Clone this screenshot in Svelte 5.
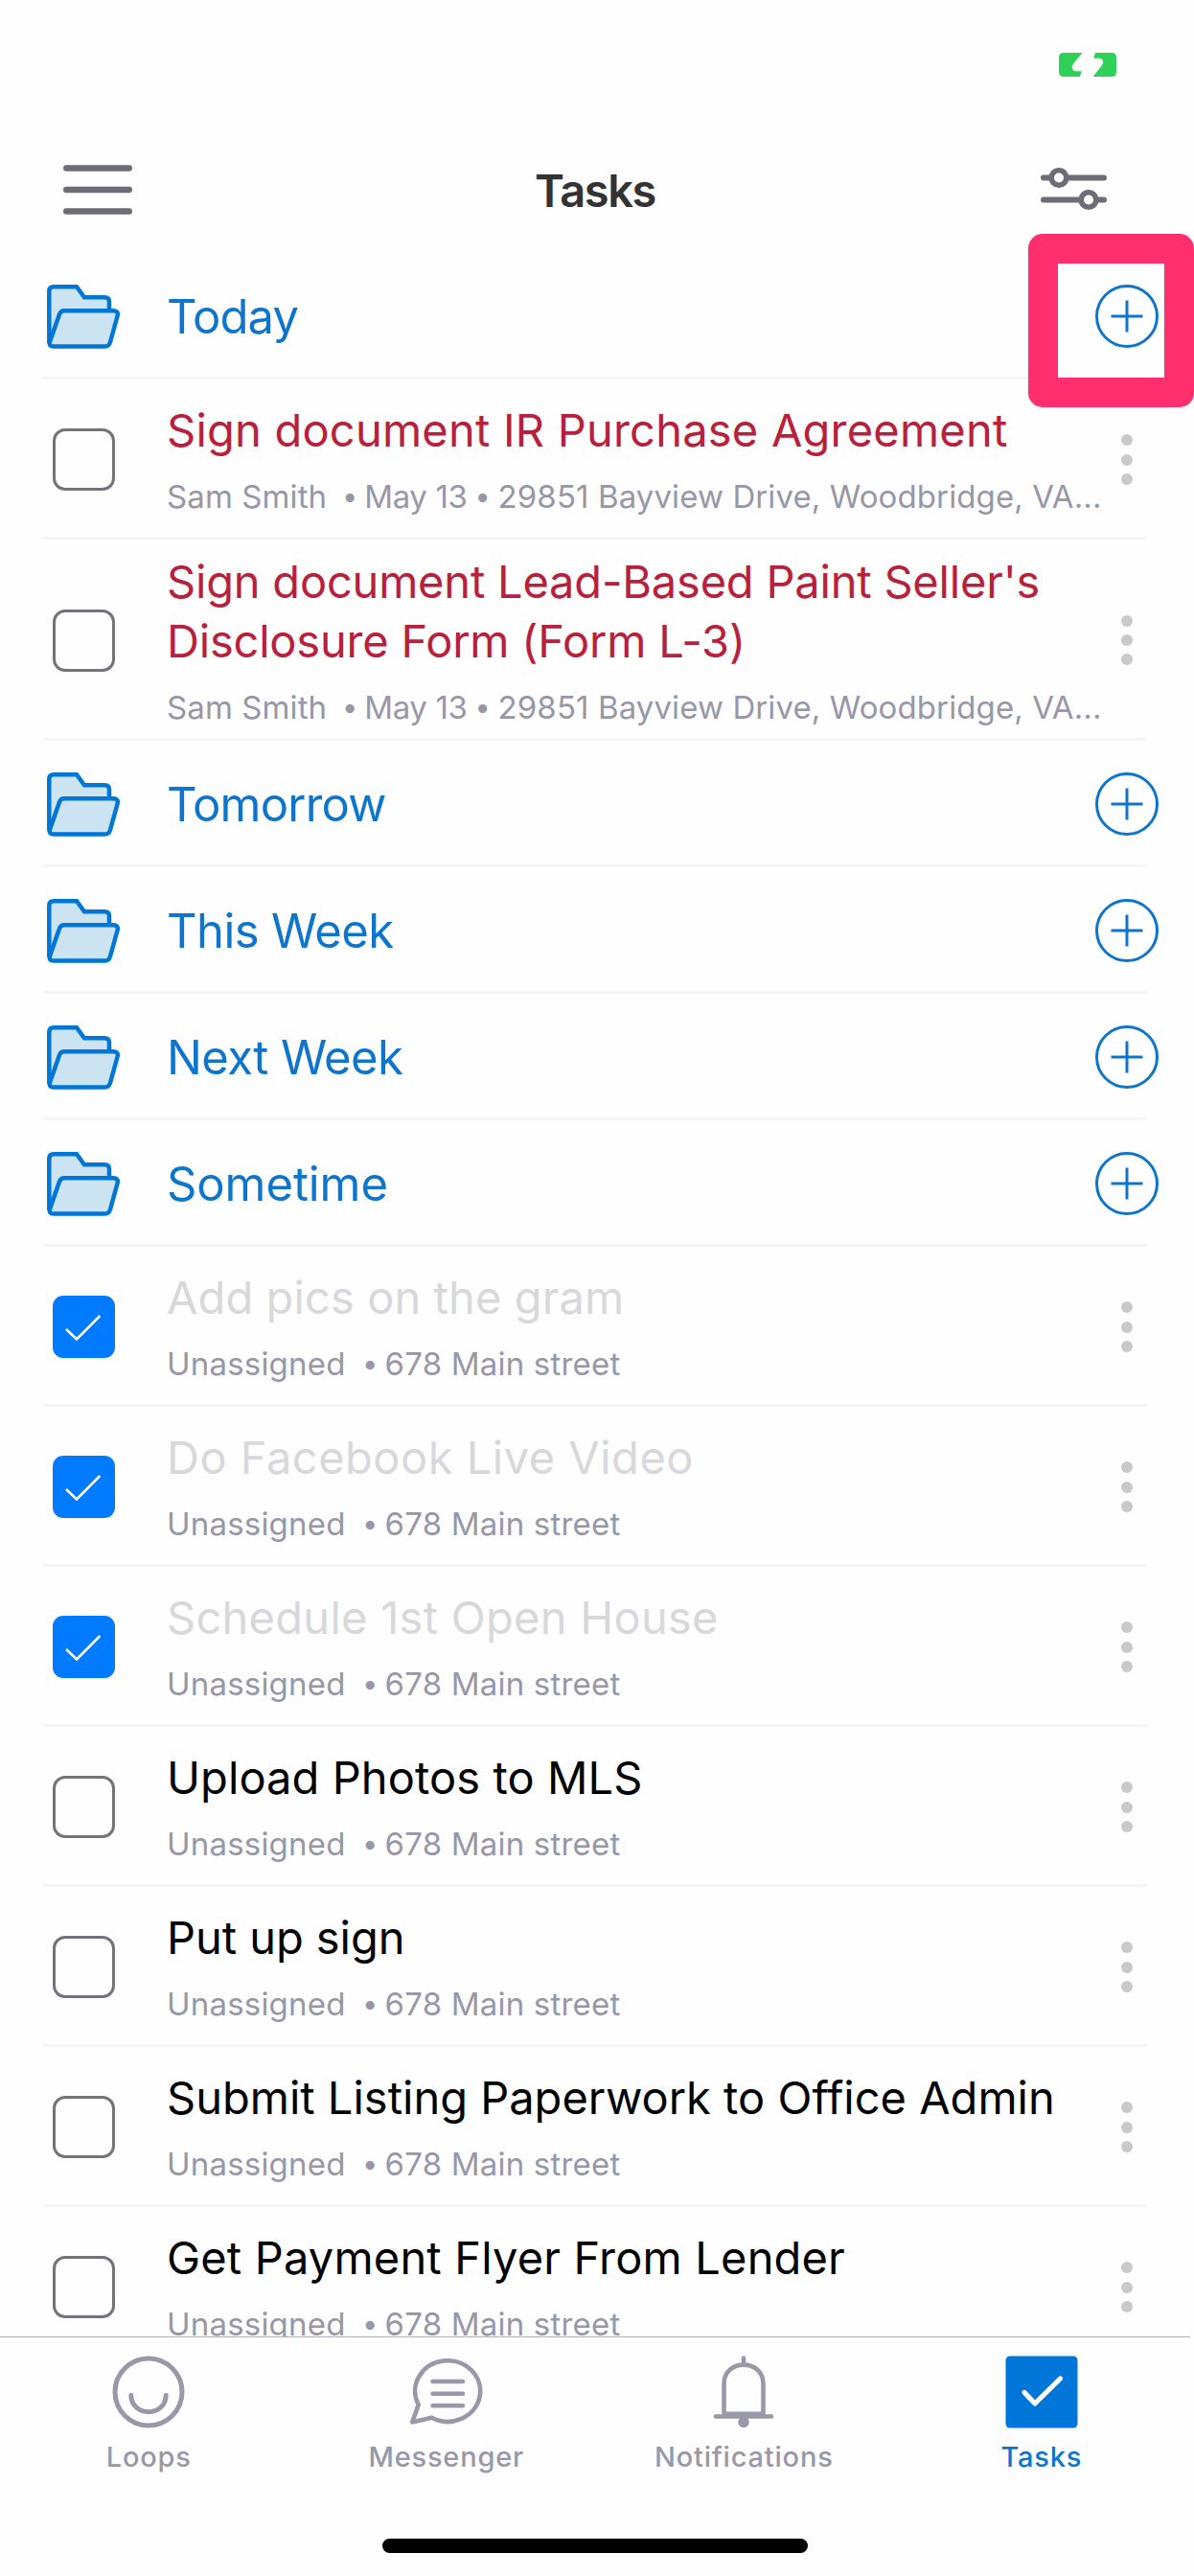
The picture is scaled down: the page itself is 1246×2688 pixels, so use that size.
<script>
  const address = '29851 Bayview Drive, Woodbridge, VA...';
  const signer = ['Sam Smith', 'May 13', address];
  const listing = ['Unassigned', '678 Main street'];

  // `tracking` is the title's letter spacing in pixels
  const rows = [
    { kind: 'folder', title: 'Today', highlighted: true, tracking: -0.9 },
    { kind: 'task', title: 'Sign document IR Purchase Agreement', overdue: true, meta: signer, tracking: 0.22 },
    { kind: 'task', title: "Sign document Lead-Based Paint Seller's Disclosure Form (Form L-3)", overdue: true, tall: true, meta: signer, tracking: -0.2 },
    { kind: 'folder', title: 'Tomorrow', tracking: -0.8 },
    { kind: 'folder', title: 'This Week', tracking: -0.6 },
    { kind: 'folder', title: 'Next Week', tracking: -0.6 },
    { kind: 'folder', title: 'Sometime', tracking: -0.1 },
    { kind: 'task', title: 'Add pics on the gram', done: true, meta: listing, tracking: 0.1 },
    { kind: 'task', title: 'Do Facebook Live Video', done: true, meta: listing, tracking: 0.5 },
    { kind: 'task', title: 'Schedule 1st Open House', done: true, meta: listing, tracking: 0.27 },
    { kind: 'task', title: 'Upload Photos to MLS', meta: listing, tracking: 0.08 },
    { kind: 'task', title: 'Put up sign', meta: listing, tracking: -0.05 },
    { kind: 'task', title: 'Submit Listing Paperwork to Office Admin', meta: listing, tracking: 0 },
    { kind: 'task', title: 'Get Payment Flyer From Lender', meta: listing, tracking: 0.18 }
  ];
  const tabs = ['Loops', 'Messenger', 'Notifications', 'Tasks'];
</script>

<div class="screen">
  <div class="status">
    <svg width="60" height="25" viewBox="0 0 60 25" aria-hidden="true">
      <path fill="#30d158" d="M5 0H24.5L15.3 11.2C12 15 14.500 19.300 18 19.300H23.700L22 25H5Q0 25 0 20V5Q0 0 5 0Z" />
      <path fill="#30d158" d="M38 0H55Q60 0 60 5V20Q60 25 55 25H35.500L44.500 13.800C48 9.500 45.500 5.800 42 5.800H36.300Z" />
    </svg>
  </div>

  <header>
    <svg width="72" height="54" viewBox="0 0 72 54" fill="none" stroke="#6d6c77" stroke-width="6.300" stroke-linecap="round">
      <path d="M3.200 4.500H68.800M3.200 27H68.800M3.200 49.500H68.800" />
    </svg>
    <h1>Tasks</h1>
    <svg class="filter" width="70" height="46" viewBox="0 0 70 46" fill="none" stroke="#6d6c77" stroke-width="6" stroke-linecap="round">
      <path d="M3 11.500H66M3 34.500H66" />
      <circle cx="19" cy="11.500" r="7.800" fill="#fff" stroke-width="5.600" />
      <circle cx="50" cy="34.500" r="7.800" fill="#fff" stroke-width="5.600" />
    </svg>
  </header>

  <main>
    {#each rows as row}
      <section class="row {row.kind}" class:tall={row.tall}>
        {#if row.kind === 'folder'}
          <div class="lead">
            <svg width="76" height="67" viewBox="0 0 76 67" fill="#cce3f2" stroke="#0076d6" stroke-width="4.500" stroke-linejoin="round">
              <path d="M2.300 60V7Q2.300 2.300 7 2.300H31L39 13.300H60Q65 13.300 65 18V28L30 50Z" stroke="none" />
              <path d="M2.300 61V7Q2.300 2.300 7 2.300H31L39 13.300H60Q65 13.300 65 18V27" fill="none" stroke-linejoin="miter" />
              <path d="M18 27.300H69Q75 27.300 73.500 33L66 60Q64.700 64.600 60.500 64.600H7Q1.500 64.600 3.200 59L13 31Q14.500 27.300 18 27.300Z" />
            </svg>
          </div>
          <h2 style:letter-spacing="{row.tracking}px">{row.title}</h2>
          <button class="add" aria-label="Add task" class:highlighted={row.highlighted}>
            <svg width="66" height="66" viewBox="0 0 66 66" fill="none" stroke="#0e75cd" stroke-width="3">
              <circle cx="33" cy="33" r="31.500" />
              <path d="M16.500 33H49.500M33 16.500V49.500" />
            </svg>
          </button>
        {:else}
          <div class="lead">
            <div class="box" class:checked={row.done}>
              {#if row.done}
                <svg width="65" height="65" viewBox="0 0 65 65" fill="none" stroke="#fff" stroke-width="2.600">
                  <path d="M14 35L25 45.500L49.300 21" />
                </svg>
              {/if}
            </div>
          </div>
          <div class="body">
            <p class="title" class:overdue={row.overdue} class:done={row.done} style:letter-spacing="{row.tracking}px">{row.title}</p>
            <p class="meta" class:dated={row.meta.length > 2}>
              {#each row.meta as part, i}
                {#if i > 0}<span class="bullet" class:first={i === 1}>•</span>{/if}
                <span>{part}</span>
              {/each}
            </p>
          </div>
          <div class="dots"><i></i><i></i><i></i></div>
        {/if}
      </section>
    {/each}
  </main>

  <nav>
    {#each tabs as tab}
      <div class="tab" class:active={tab === 'Tasks'}>
        <svg width="76" height="76" viewBox="0 0 76 76" fill="none" stroke="#9998a8" stroke-width="5" stroke-linecap="round" stroke-linejoin="round">
          {#if tab === 'Loops'}
            <circle cx="38" cy="38" r="35" />
            <path d="M19.800 41.500C20.500 64.500 55.500 64.500 56.200 41.500" />
          {:else if tab === 'Messenger'}
            <path stroke-width="4.600" d="M8.700 51.200A34 31.800 0 1 1 22.500 64.800L2.200 69.400Z" />
            <path stroke-width="4.600" d="M23.500 27H55M23.500 39.700H55M23.500 52.300H55" />
          {:else if tab === 'Notifications'}
            <path stroke-width="4.600" d="M38 2.500V9M17.500 60V29.500C17.500 3 58.500 3 58.500 29.500V60M9 63.500H67" />
            <path stroke="none" fill="#9998a8" d="M17 58.500H59V65H17Z" />
            <circle cx="38" cy="69.500" r="5.700" stroke="none" fill="#9998a8" />
          {:else}
            <rect x="0.500" y="0.500" width="75" height="75" rx="4.500" fill="#0076d8" stroke="none" />
            <path stroke="#fff" stroke-width="5.200" d="M20 38.500L31 50L57.500 24" />
          {/if}
        </svg>
        <span>{tab}</span>
      </div>
    {/each}
  </nav>
  <footer><div class="home"></div></footer>
</div>

<style>
  :global(body) { margin: 0; background: #fff; }
  .screen {
    width: 1246px; height: 2688px; overflow: hidden; box-sizing: border-box;
    display: flex; flex-direction: column;
    font-family: Inter, "Liberation Sans", sans-serif; background: #fefefe;
  }
  svg { display: block; flex: none; }
  h1, h2, p { margin: 0; font-weight: 400; }
  .status { flex: none; height: 132px; box-sizing: border-box; padding: 55px 81px 0 0; display: flex; justify-content: flex-end; }
  header {
    flex: none; height: 132px; box-sizing: border-box; padding: 0 90px 0 66px;
    display: flex; justify-content: space-between; align-items: center;
  }
  h1 { font-size: 47px; font-weight: 600; letter-spacing: -1.4px; color: #333; line-height: 60px; padding-top: 2px; padding-left: 18px; }
  .filter { margin-bottom: 3px; }
  main { flex: none; height: 2174px; }
  .row {
    height: 167px; box-sizing: border-box; margin-left: 45px; width: 1152px;
    display: flex; align-items: center; box-shadow: inset 0 -3px #f5f5f6;
  }
  .row.folder { height: 132px; }
  .row.tall { height: 210px; }
  .lead { width: 129px; flex: none; padding-left: 4px; box-sizing: border-box; }
  h2 { flex: 1; font-size: 49px; color: #0e75cd; line-height: 60px; padding-top: 2px; }
  .add {
    position: relative; flex: none; padding: 0; border: 0; background: none;
    width: 66px; height: 66px; margin-right: -12px;
  }
  .highlighted::before {
    content: ""; position: absolute; left: -70px; top: -53px; width: 111px; height: 119px;
    border: 31px solid #ff2e6c; border-radius: 15px; z-index: 1;
  }
  .box {
    box-sizing: border-box; width: 65px; height: 65px; margin-left: 5.500px;
    border: 3px solid #74737d; border-radius: 13px;
  }
  .box.checked { border: 0; background: #007aff; border-radius: 11px; }
  .body { flex: none; width: 990px; padding-bottom: 1px; }
  .title { font-size: 47px; line-height: 62px; color: #000; width: 950px; }
  .title.overdue { color: #b8213c; }
  .title.done { color: #d8d8dc; }
  .meta {
    display: flex; margin-top: 16px; font-size: 33px; line-height: 44px;
    letter-spacing: 0.2px; color: #9797a7; white-space: nowrap;
  }
  .meta.dated { letter-spacing: 0.1px; }
  .meta.dated span:nth-child(3) { letter-spacing: -0.35px; }
  .bullet { width: 31px; text-align: center; font-size: 29px; letter-spacing: 0; }
  .bullet.first { padding-left: 10px; }
  .dated .bullet.first { padding-left: 9px; width: 30px; }
  .dated .bullet { width: 32px; }
  .dots { flex: none; display: flex; flex-direction: column; gap: 8.400px; margin-left: 6px; }
  .dots i { width: 12px; height: 12px; border-radius: 50%; background: #c9c9c9; }
  nav {
    position: relative; flex: none; width: 1242px; height: 162px; box-sizing: border-box;
    border-top: 1px solid #b0b0b5; display: flex; background: #fdfdfd;
  }
  .tab { flex: 1; display: flex; flex-direction: column; align-items: center; padding-top: 19px; }
  .tab span { margin-top: 11px; font-size: 29px; line-height: 38px; font-weight: 500; letter-spacing: 0.8px; color: #9998a8; }
  .tab.active span { color: #0e75cd; }
  footer { position: relative; flex: 1; width: 1242px; display: flex; justify-content: center; padding-top: 49px; background: #fdfdfd; }
  .home { width: 444px; height: 15px; border-radius: 8px; background: #000; }
</style>
